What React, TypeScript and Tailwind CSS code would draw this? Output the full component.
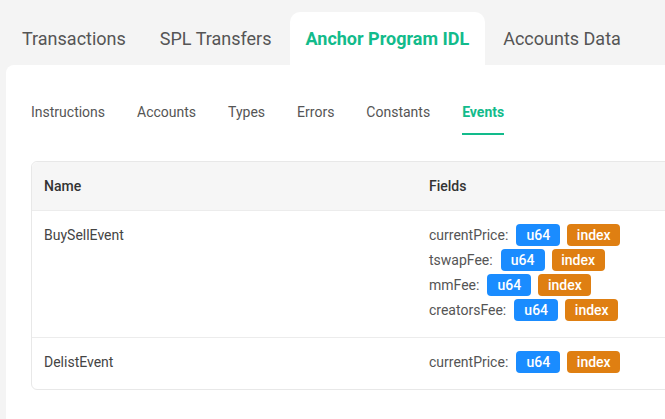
import React from "react";

const GREEN = "text-[#12bb8b]";

function Badge({ kind, children }: { kind: "blue" | "orange"; children: React.ReactNode }) {
  return (
    <span
      className={
        "inline-flex h-[22px] items-center justify-center rounded-[4px] text-[14px] font-medium text-white " +
        (kind === "blue" ? "bg-[#1a8cff] w-[44px]" : "bg-[#df7f12] w-[53px]")
      }
    >
      {children}
    </span>
  );
}

function Field({ name }: { name: string }) {
  return (
    <div className="flex h-[22px] items-center">
      <span className="text-[14px] text-[#555] mr-[8px]">{name}:</span>
      <Badge kind="blue">u64</Badge>
      <span className="w-[7px]" />
      <Badge kind="orange">index</Badge>
    </div>
  );
}

export default function App() {
  const tabs = ["Transactions", "SPL Transfers", "Anchor Program IDL", "Accounts Data"];
  const sub = ["Instructions", "Accounts", "Types", "Errors", "Constants", "Events"];
  return (
    <div
      className="flex h-[419px] w-full flex-col overflow-hidden bg-[#f4f4f4]"
      style={{ fontFamily: "Roboto, 'Noto Sans', sans-serif" }}
    >
      <div className="flex gap-[2px] pl-[6px] pt-[12px]">
        {tabs.map((t, i) => (
          <div
            key={t}
            className={
              "flex h-[53px] items-center px-4 text-[18px] whitespace-nowrap " +
              (i === 2 ? "rounded-t-[10px] bg-white font-bold " + GREEN : "text-[#555]")
            }
          >
            {t}
          </div>
        ))}
      </div>
      <div className="ml-[6px] flex-1 rounded-tl-[8px] bg-white pl-[25px]">
        <div className="mt-[35px] flex gap-[32px]">
          {sub.map((s, i) => (
            <div key={s} className="flex flex-col">
              <span
                className={
                  "text-[14px] leading-[24px] whitespace-nowrap " +
                  (i === 5 ? "font-bold " + GREEN : "text-[#555]")
                }
              >
                {s}
              </span>
              <div className={"mt-[9px] h-[2px] " + (i === 5 ? "bg-[#12bb8b]" : "")} />
            </div>
          ))}
        </div>
        <div className="mt-[26px] w-[700px] rounded-[6px] border border-[#e8e8e8]">
          <div className="flex h-[48px] items-center rounded-t-[6px] bg-[#f6f6f6] text-[14px] font-medium text-[#333]">
            <div className="w-[384px] pl-[12px]">Name</div>
            <div className="pl-[13px]">Fields</div>
          </div>
          <div className="flex border-t border-[#ececec] pt-[13px] pb-[16px]">
            <div className="w-[384px] pl-[12px] text-[14px] leading-[22px] text-[#444]">BuySellEvent</div>
            <div className="flex flex-col gap-[3px] pl-[13px]">
              <Field name="currentPrice" />
              <Field name="tswapFee" />
              <Field name="mmFee" />
              <Field name="creatorsFee" />
            </div>
          </div>
          <div className="flex border-t border-[#ececec] pt-[13px] pb-[16px]">
            <div className="w-[384px] pl-[12px] text-[14px] leading-[22px] text-[#444]">DelistEvent</div>
            <div className="flex flex-col gap-[3px] pl-[13px]">
              <Field name="currentPrice" />
            </div>
          </div>
        </div>
      </div>
    </div>
  );
}
